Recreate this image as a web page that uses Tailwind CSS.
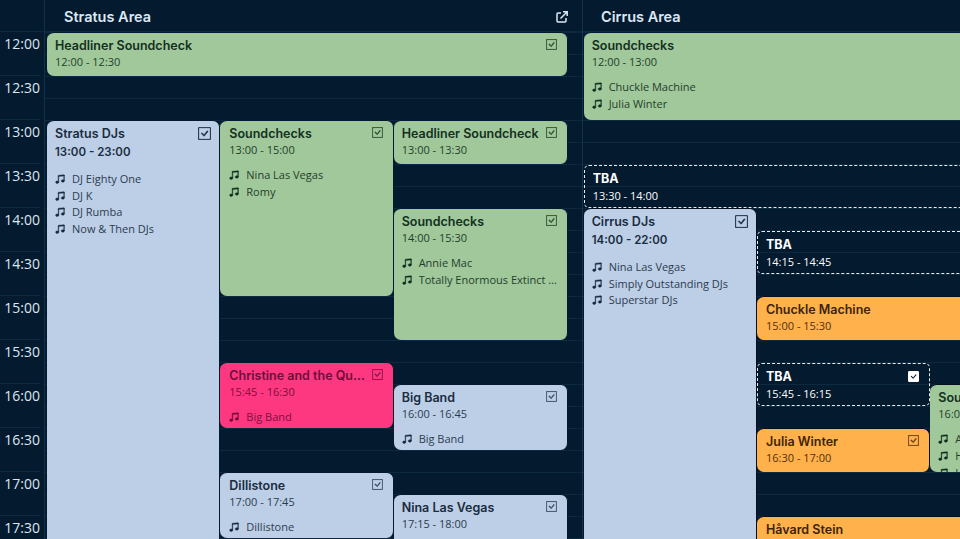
<!DOCTYPE html>
<html lang="en">
<head>
  <meta charset="UTF-8">
  <title>Festival Schedule</title>
  <script src="https://cdn.jsdelivr.net/npm/@tailwindcss/browser@4"></script>
</head>
<body class="bg-[#041a2e] font-['Open_Sans',sans-serif]">
  <svg class="hidden">
    <symbol id="note" viewBox="0 0 16 16" fill="currentColor" stroke="currentColor" stroke-width="0.6">
      <path d="M6 13c0 1.105-1.12 2-2.500 2S1 14.105 1 13c0-1.104 1.120-2 2.500-2s2.500.896 2.500 2zm9-2c0 1.105-1.120 2-2.500 2s-2.500-.895-2.500-2 1.120-2 2.500-2 2.500.895 2.500 2z"/>
      <path fill-rule="evenodd" d="M14 11V2h1v9h-1zM6 3v10H5V3h1z"/>
      <path d="M5 2.905a1 1 0 0 1 .9-.995l8-.8a1 1 0 0 1 1.100.995V3L5 4V2.905z"/>
    </symbol>
    <symbol id="check" viewBox="0 0 16 16" fill="currentColor" stroke="currentColor" stroke-width="0.5">
      <path d="M14 1a1 1 0 0 1 1 1v12a1 1 0 0 1-1 1H2a1 1 0 0 1-1-1V2a1 1 0 0 1 1-1h12zM2 0a2 2 0 0 0-2 2v12a2 2 0 0 0 2 2h12a2 2 0 0 0 2-2V2a2 2 0 0 0-2-2H2z"/>
      <path d="M10.970 4.970a.75.75 0 0 1 1.071 1.050l-3.992 4.990a.75.75 0 0 1-1.080.020L4.324 8.384a.75.75 0 1 1 1.060-1.060l2.094 2.093 3.473-4.425a.235.235 0 0 1 .02-.022z"/>
    </symbol>
    <symbol id="check-fill" viewBox="0 0 16 16" fill="currentColor">
      <path d="M2 0a2 2 0 0 0-2 2v12a2 2 0 0 0 2 2h12a2 2 0 0 0 2-2V2a2 2 0 0 0-2-2H2zm10.030 4.970a.75.75 0 0 1 .011 1.050l-3.992 4.990a.75.75 0 0 1-1.080.020L4.324 8.384a.75.75 0 1 1 1.060-1.060l2.094 2.093 3.473-4.425a.75.75 0 0 1 1.079-.022z"/>
    </symbol>
  </svg>

  <div class="flex h-[539px] w-[960px] overflow-hidden">

    <!-- times -->
    <div class="w-[45px] shrink-0 border-r border-[#12314a]">
      <div class="h-[32px] border-b border-[#0d2940]"></div>
      <div class="text-[14px] leading-[20px] text-[#dce7f2] text-right pr-1 [&>div]:h-[44px] [&>div]:pt-[2px] [&>div]:border-b [&>div]:border-[#0d2940]">
        <div>12:00</div>
        <div>12:30</div>
        <div>13:00</div>
        <div>13:30</div>
        <div>14:00</div>
        <div>14:30</div>
        <div>15:00</div>
        <div>15:30</div>
        <div>16:00</div>
        <div>16:30</div>
        <div>17:00</div>
        <div>17:30</div>
      </div>
    </div>

    <!-- stratus -->
    <div class="w-[538px] shrink-0 border-r border-[#12314a]">
      <div class="h-[32px] flex items-center justify-between pl-[19px] pr-[14px] border-b border-[#0d2940] pt-[3px]">
        <span class="font-['Inter',sans-serif] font-semibold text-[14.5px] text-[#dce8f5]">Stratus Area</span>
        <svg class="w-3 h-3 text-[#dce8f5]" viewBox="0 0 12 12" fill="none" stroke="currentColor" stroke-width="1.5"><path d="M5 2H2a1 1 0 0 0-1 1v7a1 1 0 0 0 1 1h7a1 1 0 0 0 1-1V7"/><path d="M4.500 7.500 11 1M7 .8h4.200V5"/></svg>
      </div>
      <div class="bg-[linear-gradient(#0d2940_1px,transparent_1px)] bg-[size:100%_22px] pl-[2px]">
      <div class="w-[520px] grid grid-cols-3 grid-rows-[repeat(30,22px)]">
        <div class="col-span-3 -mr-px row-start-1 row-span-2 border-t border-r border-[#041a2e] rounded-[7px] overflow-hidden px-2 pt-[5px] bg-[#a0c89a] text-[#14301f]">
          <div class="flex items-center justify-between h-4 pr-0.5"><span class="truncate font-['Inter',sans-serif] font-semibold text-[12.5px]">Headliner Soundcheck</span><svg class="w-[11px] h-[11px] mb-[3px] shrink-0 opacity-80"><use href="#check"/></svg></div>
          <div class="text-[11px] leading-4 opacity-90">12:00 - 12:30</div>
        </div>

        <div class="col-start-1 row-start-5 row-end-31 border-t border-r border-[#041a2e] rounded-[7px] overflow-hidden px-2 pt-[5px] bg-[#bccfe6] text-[#1a2c40]">
          <div class="flex items-center justify-between h-4"><span class="truncate font-['Inter',sans-serif] font-semibold text-[12.5px]">Stratus DJs</span><svg class="w-[13px] h-[13px] mb-px shrink-0"><use href="#check"/></svg></div>
          <div class="mt-0.5 font-['Inter',sans-serif] font-semibold text-[11.5px] leading-4">13:00 - 23:00</div>
          <div class="mt-[11px] text-[11px] leading-[16.6px] [&>div]:flex [&>div]:items-center [&>div]:gap-[7px] [&_svg]:w-2.5 [&_svg]:h-2.5 [&_svg]:shrink-0 [&_span]:opacity-90">
            <div><svg><use href="#note"/></svg><span>DJ Eighty One</span></div>
            <div><svg><use href="#note"/></svg><span>DJ K</span></div>
            <div><svg><use href="#note"/></svg><span>DJ Rumba</span></div>
            <div><svg><use href="#note"/></svg><span>Now &amp; Then DJs</span></div>
          </div>
        </div>

        <div class="col-start-2 row-start-5 row-span-8 border-t border-r border-[#041a2e] rounded-[7px] overflow-hidden pl-[9px] pr-2 pt-[5px] bg-[#a0c89a] text-[#14301f]">
          <div class="flex items-center justify-between h-4 pr-0.5"><span class="truncate font-['Inter',sans-serif] font-semibold text-[12.5px]">Soundchecks</span><svg class="w-[11px] h-[11px] mb-[3px] shrink-0 opacity-80"><use href="#check"/></svg></div>
          <div class="text-[11px] leading-4 opacity-90">13:00 - 15:00</div>
          <div class="mt-[8px] text-[11px] leading-[17px] [&>div]:flex [&>div]:items-center [&>div]:gap-[7px] [&_svg]:w-2.5 [&_svg]:h-2.5 [&_svg]:shrink-0 [&_span]:opacity-90">
            <div><svg><use href="#note"/></svg><span>Nina Las Vegas</span></div>
            <div><svg><use href="#note"/></svg><span>Romy</span></div>
          </div>
        </div>

        <div class="col-start-3 -mr-px row-start-5 row-span-2 border-t border-r border-[#041a2e] rounded-[7px] overflow-hidden px-2 pt-[5px] bg-[#a0c89a] text-[#14301f]">
          <div class="flex items-center justify-between h-4 pr-0.5"><span class="truncate font-['Inter',sans-serif] font-semibold text-[12.5px]">Headliner Soundcheck</span><svg class="w-[11px] h-[11px] mb-[3px] shrink-0 opacity-80"><use href="#check"/></svg></div>
          <div class="text-[11px] leading-4 opacity-90">13:00 - 13:30</div>
        </div>

        <div class="col-start-3 -mr-px row-start-9 row-span-6 border-t border-r border-[#041a2e] rounded-[7px] overflow-hidden px-2 pt-[5px] bg-[#a0c89a] text-[#14301f]">
          <div class="flex items-center justify-between h-4 pr-0.5"><span class="truncate font-['Inter',sans-serif] font-semibold text-[12.5px]">Soundchecks</span><svg class="w-[11px] h-[11px] mb-[3px] shrink-0 opacity-80"><use href="#check"/></svg></div>
          <div class="text-[11px] leading-4 opacity-90">14:00 - 15:30</div>
          <div class="mt-[8px] text-[11px] leading-[17px] [&>div]:flex [&>div]:items-center [&>div]:gap-[7px] [&_svg]:w-2.5 [&_svg]:h-2.5 [&_svg]:shrink-0 [&_span]:opacity-90">
            <div><svg><use href="#note"/></svg><span>Annie Mac</span></div>
            <div><svg><use href="#note"/></svg><span class="truncate">Totally Enormous Extinct Dinosaurs</span></div>
          </div>
        </div>

        <div class="col-start-2 row-start-[16] row-span-3 border-t border-r border-[#041a2e] rounded-[7px] overflow-hidden pl-[9px] pr-2 pt-[5px] bg-[#fd3780] text-[#6f0d38]">
          <div class="flex items-center justify-between gap-1 h-4 pr-0.5"><span class="truncate font-['Inter',sans-serif] font-semibold text-[12.5px]">Christine and the Queens</span><svg class="w-[11px] h-[11px] mb-[3px] shrink-0 opacity-80"><use href="#check"/></svg></div>
          <div class="text-[11px] leading-4 opacity-90">15:45 - 16:30</div>
          <div class="mt-[8px] text-[11px] leading-[17px] [&>div]:flex [&>div]:items-center [&>div]:gap-[7px] [&_svg]:w-2.5 [&_svg]:h-2.5 [&_svg]:shrink-0 [&_span]:opacity-90">
            <div><svg><use href="#note"/></svg><span>Big Band</span></div>
          </div>
        </div>

        <div class="col-start-3 -mr-px row-start-[17] row-span-3 border-t border-r border-[#041a2e] rounded-[7px] overflow-hidden px-2 pt-[5px] bg-[#bccfe6] text-[#1a2c40]">
          <div class="flex items-center justify-between h-4 pr-0.5"><span class="truncate font-['Inter',sans-serif] font-semibold text-[12.5px]">Big Band</span><svg class="w-[11px] h-[11px] mb-[3px] shrink-0 opacity-80"><use href="#check"/></svg></div>
          <div class="text-[11px] leading-4 opacity-90">16:00 - 16:45</div>
          <div class="mt-[8px] text-[11px] leading-[17px] [&>div]:flex [&>div]:items-center [&>div]:gap-[7px] [&_svg]:w-2.5 [&_svg]:h-2.5 [&_svg]:shrink-0 [&_span]:opacity-90">
            <div><svg><use href="#note"/></svg><span>Big Band</span></div>
          </div>
        </div>

        <div class="col-start-2 row-start-[21] row-span-3 border-t border-r border-[#041a2e] rounded-[7px] overflow-hidden pl-[9px] pr-2 pt-[5px] bg-[#bccfe6] text-[#1a2c40]">
          <div class="flex items-center justify-between h-4 pr-0.5"><span class="truncate font-['Inter',sans-serif] font-semibold text-[12.5px]">Dillistone</span><svg class="w-[11px] h-[11px] mb-[3px] shrink-0 opacity-80"><use href="#check"/></svg></div>
          <div class="text-[11px] leading-4 opacity-90">17:00 - 17:45</div>
          <div class="mt-[8px] text-[11px] leading-[17px] [&>div]:flex [&>div]:items-center [&>div]:gap-[7px] [&_svg]:w-2.5 [&_svg]:h-2.5 [&_svg]:shrink-0 [&_span]:opacity-90">
            <div><svg><use href="#note"/></svg><span>Dillistone</span></div>
          </div>
        </div>

        <div class="col-start-3 -mr-px row-start-[22] row-span-3 border-t border-r border-[#041a2e] rounded-[7px] overflow-hidden px-2 pt-[5px] bg-[#bccfe6] text-[#1a2c40]">
          <div class="flex items-center justify-between h-4 pr-0.5"><span class="truncate font-['Inter',sans-serif] font-semibold text-[12.5px]">Nina Las Vegas</span><svg class="w-[11px] h-[11px] mb-[3px] shrink-0 opacity-80"><use href="#check"/></svg></div>
          <div class="text-[11px] leading-4 opacity-90">17:15 - 18:00</div>
        </div>
      </div>
      </div>
    </div>

    <!-- cirrus -->
    <div class="flex-1 min-w-0">
      <div class="h-[32px] flex items-center pl-[18px] border-b border-[#0d2940] pt-[3px]">
        <span class="font-['Inter',sans-serif] font-semibold text-[14.5px] text-[#dce8f5]">Cirrus Area</span>
      </div>
      <div class="bg-[linear-gradient(#0d2940_1px,transparent_1px)] bg-[size:100%_22px] pl-[0.67px]">
      <div class="w-[520px] grid grid-cols-3 grid-rows-[repeat(30,22px)]">
        <div class="col-span-3 -ml-px row-start-5 row-end-31 bg-[#060f1c] bg-[linear-gradient(#0c1a2a_1px,transparent_1px)] bg-[size:100%_22px]"></div>

        <div class="col-span-3 row-start-1 row-span-4 border-t border-r border-[#041a2e] rounded-[7px] overflow-hidden px-2 pt-[5px] bg-[#a0c89a] text-[#14301f]">
          <div class="flex items-center h-4"><span class="truncate font-['Inter',sans-serif] font-semibold text-[12.5px]">Soundchecks</span></div>
          <div class="text-[11px] leading-4 opacity-90">12:00 - 13:00</div>
          <div class="mt-[8px] text-[11px] leading-[17px] [&>div]:flex [&>div]:items-center [&>div]:gap-[7px] [&_svg]:w-2.5 [&_svg]:h-2.5 [&_svg]:shrink-0 [&_span]:opacity-90">
            <div><svg><use href="#note"/></svg><span>Chuckle Machine</span></div>
            <div><svg><use href="#note"/></svg><span>Julia Winter</span></div>
          </div>
        </div>

        <div class="col-span-3 mt-px row-start-7 row-span-2 border border-dashed border-[#e8edf2] rounded-[5px] overflow-hidden px-2 pt-[5px] text-white">
          <div class="flex items-center h-4"><span class="truncate font-['Inter',sans-serif] font-bold text-[12.5px]">TBA</span></div>
          <div class="mt-px text-[11px] leading-4">13:30 - 14:00</div>
        </div>

        <div class="col-start-1 row-start-9 row-end-31 border-t border-r border-[#060f1c] rounded-[7px] overflow-hidden px-2 pt-[5px] bg-[#bccfe6] text-[#1a2c40]">
          <div class="flex items-center justify-between h-4"><span class="truncate font-['Inter',sans-serif] font-semibold text-[12.5px]">Cirrus DJs</span><svg class="w-[13px] h-[13px] mb-px shrink-0"><use href="#check"/></svg></div>
          <div class="mt-0.5 font-['Inter',sans-serif] font-semibold text-[11.5px] leading-4">14:00 - 22:00</div>
          <div class="mt-[11px] text-[11px] leading-[16.6px] [&>div]:flex [&>div]:items-center [&>div]:gap-[7px] [&_svg]:w-2.5 [&_svg]:h-2.5 [&_svg]:shrink-0 [&_span]:opacity-90">
            <div><svg><use href="#note"/></svg><span>Nina Las Vegas</span></div>
            <div><svg><use href="#note"/></svg><span>Simply Outstanding DJs</span></div>
            <div><svg><use href="#note"/></svg><span>Superstar DJs</span></div>
          </div>
        </div>

        <div class="col-start-2 col-span-2 mt-px row-start-10 row-span-2 border border-dashed border-[#e8edf2] rounded-[5px] overflow-hidden px-2 pt-[5px] text-white">
          <div class="flex items-center h-4"><span class="truncate font-['Inter',sans-serif] font-bold text-[12.5px]">TBA</span></div>
          <div class="mt-px text-[11px] leading-4">14:15 - 14:45</div>
        </div>

        <div class="col-start-2 col-span-2 row-start-13 row-span-2 border-t border-r border-[#060f1c] rounded-[7px] overflow-hidden pl-[9px] pr-2 pt-[5px] bg-[#ffb14c] text-[#3d2406]">
          <div class="flex items-center h-4"><span class="truncate font-['Inter',sans-serif] font-semibold text-[12.5px]">Chuckle Machine</span></div>
          <div class="text-[11px] leading-4 opacity-90">15:00 - 15:30</div>
        </div>

        <div class="col-start-2 mt-px row-start-[16] row-span-2 border border-dashed border-[#e8edf2] rounded-[5px] overflow-hidden px-2 pt-[5px] text-white">
          <div class="flex items-center justify-between h-4 pr-[2px]"><span class="truncate font-['Inter',sans-serif] font-bold text-[12.5px]">TBA</span><svg class="w-[11px] h-[11px] mb-0.5 shrink-0"><use href="#check-fill"/></svg></div>
          <div class="mt-px text-[11px] leading-4">15:45 - 16:15</div>
        </div>

        <div class="col-start-2 row-start-[19] row-span-2 border-t border-r border-[#060f1c] rounded-[7px] overflow-hidden pl-[9px] pr-2 pt-[5px] bg-[#ffb14c] text-[#3d2406]">
          <div class="flex items-center justify-between h-4 pr-0.5"><span class="truncate font-['Inter',sans-serif] font-semibold text-[12.5px]">Julia Winter</span><svg class="w-[11px] h-[11px] mb-[3px] shrink-0 opacity-80"><use href="#check"/></svg></div>
          <div class="text-[11px] leading-4 opacity-90">16:30 - 17:00</div>
        </div>

        <div class="col-start-3 row-start-[17] row-span-4 border-t border-r border-[#060f1c] rounded-[7px] overflow-hidden px-2 pt-[5px] bg-[#a0c89a] text-[#14301f]">
          <div class="flex items-center h-4"><span class="truncate font-['Inter',sans-serif] font-semibold text-[12.5px]">Soundchecks</span></div>
          <div class="text-[11px] leading-4 opacity-90">16:00 - 17:00</div>
          <div class="mt-[8px] text-[11px] leading-[17px] [&>div]:flex [&>div]:items-center [&>div]:gap-[7px] [&_svg]:w-2.5 [&_svg]:h-2.5 [&_svg]:shrink-0 [&_span]:opacity-90">
            <div><svg><use href="#note"/></svg><span>Annie Mac</span></div>
            <div><svg><use href="#note"/></svg><span>Havard Stein</span></div>
            <div><svg><use href="#note"/></svg><span>Hot Chip</span></div>
          </div>
        </div>

        <div class="col-start-2 col-span-2 row-start-[23] row-span-3 border-t border-r border-[#060f1c] rounded-[7px] overflow-hidden pl-[9px] pr-2 pt-[5px] bg-[#ffb14c] text-[#3d2406]">
          <div class="flex items-center h-4"><span class="truncate font-['Inter',sans-serif] font-semibold text-[12.5px]">Håvard Stein</span></div>
          <div class="text-[11px] leading-4 opacity-90">17:30 - 18:15</div>
        </div>
      </div>
      </div>
    </div>
  </div>
</body>
</html>
